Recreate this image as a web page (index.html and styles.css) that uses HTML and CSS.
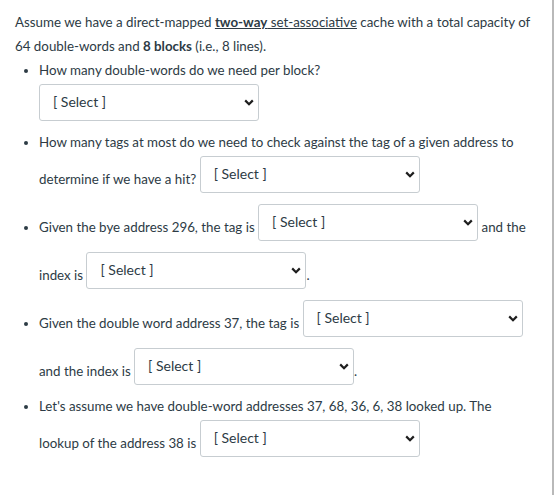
FILE: index.html
```html
<!DOCTYPE html>
<html>
<head>
<meta charset="utf-8">
<link rel="stylesheet" href="styles.css">
</head>
<body>
<div class="page">
  <div class="question">
    <p class="intro">Assume we have a direct-mapped <u><strong>two-way</strong> set-associative</u> cache with a total capacity of 64 double-words and <strong>8 blocks</strong> (i.e., 8 lines).</p>
    <ul class="items">
      <li>How many double-words do we need per block? <span class="sel"><span class="sel-inner"><span class="sel-text">[ Select ]</span><svg class="chev" viewBox="0 0 10 7"><path d="M1.2 1.4 L5 5.2 L8.8 1.4" /></svg></span></span></li>
      <li>How many tags at most do we need to check against the tag of a given address to determine if we have a hit? <span class="sel"><span class="sel-inner"><span class="sel-text">[ Select ]</span><svg class="chev" viewBox="0 0 10 7"><path d="M1.2 1.4 L5 5.2 L8.8 1.4" /></svg></span></span></li>
      <li>Given the bye address 296, the tag is <span class="sel"><span class="sel-inner"><span class="sel-text">[ Select ]</span><svg class="chev" viewBox="0 0 10 7"><path d="M1.2 1.4 L5 5.2 L8.8 1.4" /></svg></span></span> and the index is <span class="sel"><span class="sel-inner"><span class="sel-text">[ Select ]</span><svg class="chev" viewBox="0 0 10 7"><path d="M1.2 1.4 L5 5.2 L8.8 1.4" /></svg></span></span>.</li>
      <li>Given the double word address 37, the tag is <span class="sel"><span class="sel-inner"><span class="sel-text">[ Select ]</span><svg class="chev" viewBox="0 0 10 7"><path d="M1.2 1.4 L5 5.2 L8.8 1.4" /></svg></span></span> and the index is <span class="sel"><span class="sel-inner"><span class="sel-text">[ Select ]</span><svg class="chev" viewBox="0 0 10 7"><path d="M1.2 1.4 L5 5.2 L8.8 1.4" /></svg></span></span>.</li>
      <li>Let's assume we have double-word addresses 37, 68, 36, 6, 38 looked up. The lookup of the address 38 is <span class="sel"><span class="sel-inner"><span class="sel-text">[ Select ]</span><svg class="chev" viewBox="0 0 10 7"><path d="M1.2 1.4 L5 5.2 L8.8 1.4" /></svg></span></span></li>
    </ul>
  </div>
</div>
</body>
</html>
```

FILE: styles.css
```css
html, body {
  margin: 0;
  padding: 0;
  background: #ffffff;
}

.page {
  width: 554px;
  height: 495px;
  border-right: 2px solid #b9b9b9;
  box-sizing: border-box;
  padding: 10px 20px 0 15px;
  font-family: Lato, "Liberation Sans", sans-serif;
  font-size: 13.33px;
  line-height: 24px;
  color: #2d3b45;
}

.intro {
  margin: 0;
}

.intro strong {
  font-weight: 700;
}

.items {
  margin: 0;
  padding-left: 24px;
}

.items li {
  margin: 0;
}

.sel {
  display: inline-block;
  box-sizing: border-box;
  width: 220px;
  height: 37px;
  margin: 2px 0 9px 0;
  border: 1px solid #c7cdd1;
  border-radius: 3px;
  background: #ffffff;
  overflow: hidden;
  vertical-align: -18px;
}

.sel-inner {
  display: flex;
  align-items: center;
  justify-content: space-between;
  height: 100%;
  padding: 0 4px 0 13px;
}

.sel-text {
  font-size: 14px;
  line-height: 20px;
  margin-top: -2px;
  color: #2d3b45;
}

.chev {
  width: 10px;
  height: 7px;
  fill: none;
  stroke: #1f1f1f;
  stroke-width: 2.2;
}
```
